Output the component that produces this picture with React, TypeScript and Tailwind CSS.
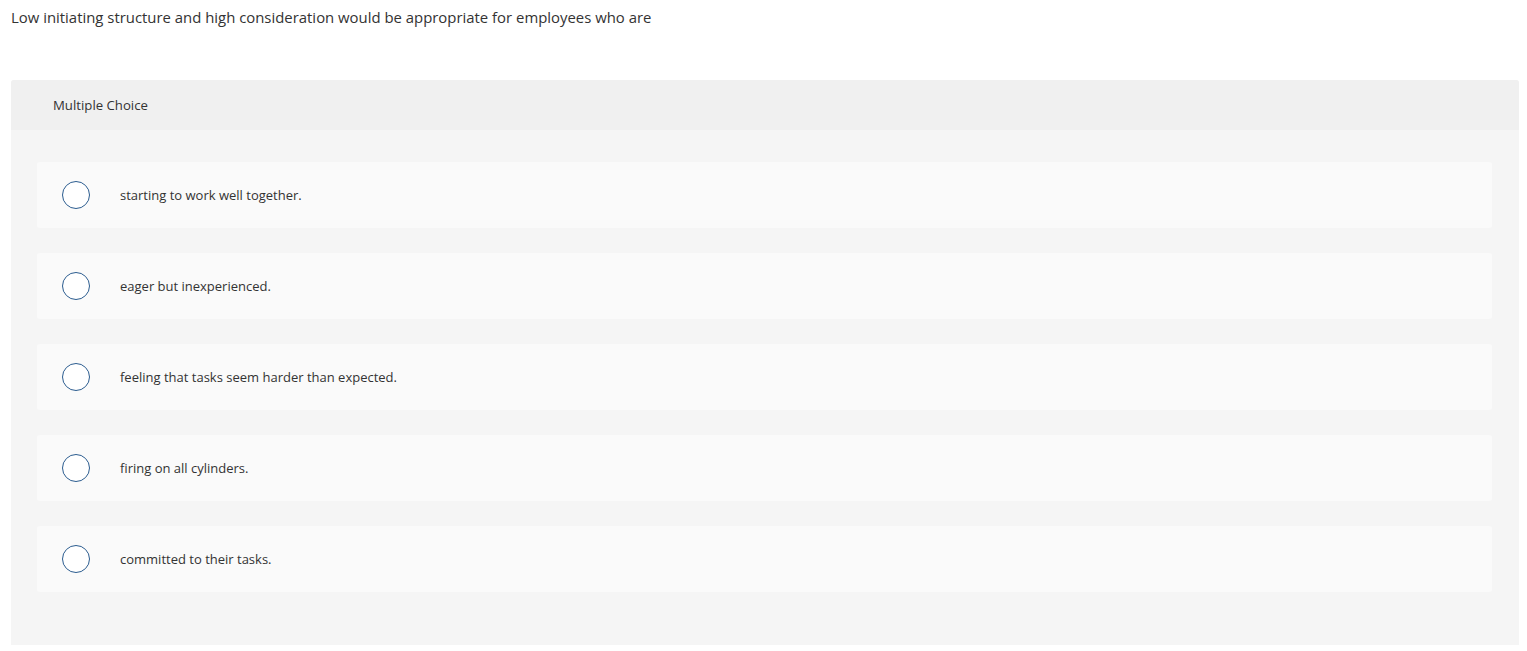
const options = [
  "starting to work well together.",
  "eager but inexperienced.",
  "feeling that tasks seem harder than expected.",
  "firing on all cylinders.",
  "committed to their tasks.",
];

export default function App() {
  return (
    <div
      className="min-h-[651px] bg-white text-[#333333]"
      style={{ fontFamily: '"Open Sans", "Lato", sans-serif' }}
    >
      <p className="px-[11px] pt-[7px] text-[14.9px] leading-[20px]">
        Low initiating structure and high consideration would be appropriate for employees who are
      </p>

      <div className="mx-[11px] mt-[53px] w-[1508px] rounded-t-[3px] bg-[#f5f5f5]">
        <div className="flex h-[50px] items-center rounded-t-[3px] bg-[#f0f0f0] px-[42px] pt-[1px] text-[13.2px]">
          Multiple Choice
        </div>

        <div className="flex flex-col gap-[25px] px-[26px] pb-[53px] pt-[32px]">
          {options.map((text) => (
            <div
              key={text}
              className="flex h-[66px] w-[1455px] items-center rounded-[3px] bg-[#fafafa]"
            >
              <span className="ml-[25px] h-[28px] w-[28px] shrink-0 rounded-full border-[1.5px] border-[#2b5c8f] bg-white" />
              <span className="ml-[30px] pt-[1px] text-[13px]">{text}</span>
            </div>
          ))}
        </div>
      </div>
    </div>
  );
}
